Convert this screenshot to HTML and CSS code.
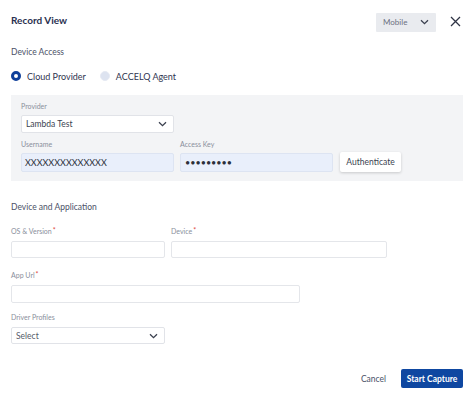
FILE: index.html
```html
<!DOCTYPE html>
<html lang="en">
<head>
<meta charset="UTF-8">
<meta name="viewport" content="width=device-width, initial-scale=1.0">
<title>Record View</title>
<link rel="stylesheet" href="styles.css">
</head>
<body>

<div class="dialog">
    <!-- Header -->
    <div class="dialog-header">
        <div class="dialog-title">Record View</div>
        <div class="header-actions">
            <div class="view-select">
                <span>Mobile</span>
                <svg class="chevron" width="9" height="6" viewBox="0 0 9 6"><path d="M1 1.2 L4.5 4.6 L8 1.2" fill="none" stroke="#3a3f4e" stroke-width="1.3"/></svg>
            </div>
            <div class="close-btn">
                <svg width="11" height="11" viewBox="0 0 11 11"><path d="M1 1 L10 10 M10 1 L1 10" fill="none" stroke="#2f3445" stroke-width="1.3"/></svg>
            </div>
        </div>
    </div>

    <div class="section-title access-title">Device Access</div>

    <div class="radio-row">
        <label class="radio">
            <span class="radio-dot selected"></span>
            <span>Cloud Provider</span>
        </label>
        <label class="radio">
            <span class="radio-dot"></span>
            <span>ACCELQ Agent</span>
        </label>
    </div>

    <!-- Cloud provider panel -->
    <div class="panel">
        <div class="field-label">Provider</div>
        <div class="select provider-select">
            <span>Lambda Test</span>
            <svg class="chevron" width="9" height="6" viewBox="0 0 9 6"><path d="M1 1.2 L4.5 4.6 L8 1.2" fill="none" stroke="#3a3f4e" stroke-width="1.3"/></svg>
        </div>
        <div class="cred-row">
            <div class="cred-field">
                <div class="field-label">Username</div>
                <div class="input filled">XXXXXXXXXXXXXX</div>
            </div>
            <div class="cred-field">
                <div class="field-label">Access Key</div>
                <div class="input filled password">&#8226;&#8226;&#8226;&#8226;&#8226;&#8226;&#8226;&#8226;&#8226;</div>
            </div>
            <div class="auth-btn">Authenticate</div>
        </div>
    </div>

    <div class="section-title app-title">Device and Application</div>

    <div class="form-row">
        <div class="form-field os-field">
            <div class="field-label">OS &amp; Version<span class="req">*</span></div>
            <div class="input"></div>
        </div>
        <div class="form-field device-field">
            <div class="field-label">Device<span class="req">*</span></div>
            <div class="input"></div>
        </div>
    </div>

    <div class="form-field url-field">
        <div class="field-label">App Url<span class="req">*</span></div>
        <div class="input tall"></div>
    </div>

    <div class="form-field driver-field">
        <div class="field-label">Driver Profiles</div>
        <div class="select driver-select">
            <span>Select</span>
            <svg class="chevron" width="9" height="6" viewBox="0 0 9 6"><path d="M1 1.2 L4.5 4.6 L8 1.2" fill="none" stroke="#3a3f4e" stroke-width="1.3"/></svg>
        </div>
    </div>

    <div class="dialog-footer">
        <div class="cancel-btn">Cancel</div>
        <div class="primary-btn">Start Capture</div>
    </div>
</div>

</body>
</html>
```

FILE: styles.css
```css
body {
    margin: 0;
    padding: 0;
    background-color: #fff;
    font-family: Lato, "Open Sans", Arial, sans-serif;
    color: #2b3150;
}
.dialog {
    width: 474px;
    padding: 11px 11px 0 11px;
    box-sizing: border-box;
}
.dialog-header {
    display: flex;
    justify-content: space-between;
    align-items: center;
    height: 21px;
}
.dialog-title {
    font-size: 10px;
    font-weight: bold;
    color: #2a3050;
    margin-top: -3px;
}
.header-actions {
    display: flex;
    align-items: center;
}
.view-select {
    width: 60px;
    height: 19px;
    box-sizing: border-box;
    background-color: #e9ebef;
    border-radius: 1px;
    display: flex;
    align-items: center;
    justify-content: space-between;
    padding: 0 7px 0 7px;
    font-size: 8px;
    color: #6b7080;
    margin-top: 1px;
}
.close-btn {
    margin-left: 14px;
    margin-right: 2px;
    display: flex;
    margin-top: -1px;
}
.section-title {
    font-size: 8.5px;
    line-height: 10px;
    color: #4b5167;
}
.access-title {
    margin-top: 15px;
}
.radio-row {
    display: flex;
    align-items: center;
    height: 12px;
    margin-top: 13px;
    font-size: 9px;
    color: #2f3550;
}
.radio {
    display: flex;
    align-items: center;
    margin-right: 14px;
}
.radio-dot {
    width: 10px;
    height: 10px;
    box-sizing: border-box;
    border-radius: 50%;
    background-color: #dde3f0;
    border: 1px solid #e6eaf3;
    margin-right: 6px;
}
.radio-dot.selected {
    background-color: #fff;
    border: 3px solid #0e3f9a;
    margin-left: 0;
}
.radio:first-child .radio-dot {
    margin-right: 6px;
}
.panel {
    margin-top: 13px;
    background-color: #f3f4f6;
    padding: 7px 10px 9px 10px;
}
.field-label {
    font-size: 7px;
    line-height: 9px;
    color: #8a8f9c;
}
.req {
    color: #e0453c;
    margin-left: 1px;
    position: relative;
    top: -1px;
}
.select {
    display: flex;
    align-items: center;
    justify-content: space-between;
    box-sizing: border-box;
    background-color: #fff;
    border: 1px solid #e1e3e8;
    border-radius: 2px;
    font-size: 8.5px;
    color: #3a3f50;
}
.provider-select {
    width: 153px;
    height: 18px;
    margin-top: 4px;
    padding: 0 6px 0 4px;
}
.cred-row {
    display: flex;
    align-items: flex-end;
    margin-top: 7px;
}
.cred-field {
    width: 153px;
    margin-right: 6px;
}
.cred-field + .cred-field {
    margin-right: 7px;
}
.cred-field .input {
    margin-top: 4px;
}
.input {
    box-sizing: border-box;
    background-color: #fff;
    border: 1px solid #e4e6ea;
    border-radius: 2px;
    height: 17px;
}
.input.tall {
    height: 18px;
}
.input.filled {
    height: 19px;
    background-color: #e9effb;
    border-color: #dde4f2;
    font-size: 9px;
    color: #2b2f3a;
    padding-left: 3px;
    display: flex;
    align-items: center;
}
.input.password {
    font-size: 9px;
    letter-spacing: 0;
    padding-left: 4px;
}
.auth-btn {
    width: 61px;
    height: 20px;
    box-sizing: border-box;
    background-color: #fff;
    border-radius: 2px;
    box-shadow: 0 1px 3px rgba(0, 0, 0, 0.18);
    font-size: 8.5px;
    color: #3a3f50;
    display: flex;
    align-items: center;
    justify-content: center;
    margin-bottom: 0;
}
.app-title {
    margin-top: 21px;
}
.form-row {
    display: flex;
    margin-top: 15px;
}
.form-field .input,
.form-field .select {
    margin-top: 5px;
}
.os-field {
    width: 154px;
    margin-right: 6px;
}
.device-field {
    width: 216px;
}
.url-field {
    width: 289px;
    margin-top: 13px;
}
.driver-field {
    width: 154px;
    margin-top: 10px;
}
.driver-select {
    height: 17px;
    padding: 0 6px 0 4px;
    color: #555a68;
}
.dialog-footer {
    display: flex;
    justify-content: flex-end;
    align-items: center;
    margin-top: 25px;
}
.cancel-btn {
    font-size: 8.5px;
    color: #4a5068;
    margin-right: 15px;
}
.primary-btn {
    width: 62px;
    height: 19px;
    background-color: #0e47a1;
    color: #fff;
    font-size: 8.5px;
    font-weight: bold;
    border-radius: 2px;
    display: flex;
    align-items: center;
    justify-content: center;
}
```
